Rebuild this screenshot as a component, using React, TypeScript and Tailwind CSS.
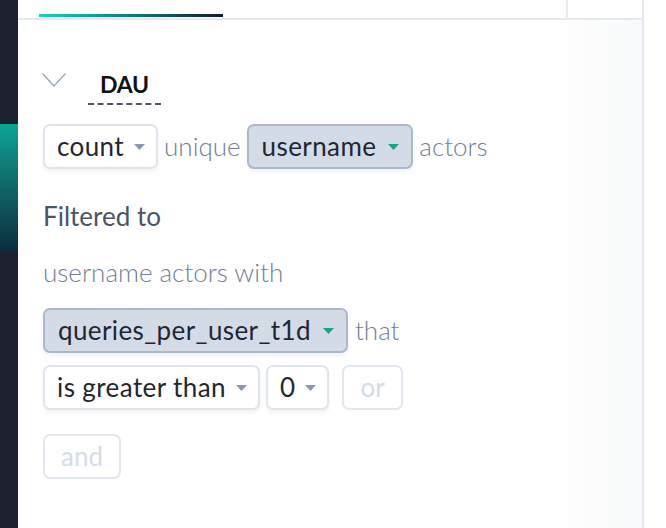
import React from "react";

const Caret = ({ teal = false }: { teal?: boolean }) => (
  <svg width="11" height="6" viewBox="0 0 11 6" className="shrink-0">
    <path d="M0 0 L11 0 L5.5 6 Z" fill={teal ? "#1aa386" : "#8a96ab"} />
  </svg>
);

const Select = ({ label, active = false }: { label: string; active?: boolean }) => (
  <div
    className={
      active
        ? "flex h-[45px] items-center gap-[12px] rounded-[7px] border-2 border-[#a9b8cc] bg-[#d3dce6] pl-[13px] pr-[12px] tracking-[0.4px] text-[#1f2733] shadow-[0_3px_4px_rgba(0,0,0,0.05)]"
        : "flex h-[45px] items-center gap-[10px] rounded-[7px] border-2 border-[#dfe4ed] bg-white pl-[12px] pr-[11px] tracking-[0.4px] text-[#1f2733] shadow-[0_3px_4px_rgba(0,0,0,0.05)]"
    }
  >
    <span>{label}</span>
    <Caret teal={active} />
  </div>
);

const Ghost = ({ label }: { label: string }) => (
  <div className="flex h-[45px] items-center rounded-[7px] border-2 border-[#e2e7ef] bg-white px-[16px] text-[#d5dce6]">
    {label}
  </div>
);

export default function App() {
  return (
    <div
      className="flex h-[528px] w-[666px] overflow-hidden bg-white text-[26px]"
      style={{ fontFamily: "Lato, 'Noto Sans', sans-serif" }}
    >
      {/* left dark sidebar */}
      <div className="relative flex w-[18px] shrink-0 flex-col bg-[#1b222d]">
        <div className="h-[124px] overflow-hidden">
          <span className="relative left-[-10px] top-[70px] block text-[20px] leading-none text-[#9aa4b1]">
            s
          </span>
        </div>
        <div className="h-[128px] bg-gradient-to-b from-[#0ea593] to-[#0a2d3d]" />
      </div>

      {/* main panel */}
      <div className="flex w-[626px] shrink-0 flex-col border-r-2 border-[#e3e7ed] bg-gradient-to-r from-white from-85% to-[#f8f9fa]">
        {/* tab bar */}
        <div className="flex h-[20px] shrink-0 border-b-2 border-[#e6e9ee] bg-white">
          <div className="flex w-[548px] items-end pl-[21px]">
            <div className="mb-px h-[3px] w-[184px] bg-gradient-to-r from-[#14d6bc] via-[#0a7f7c] to-[#0b1c2c]" />
          </div>
          <div className="w-[2px] bg-[#e6e9ee]" />
        </div>

        <div className="flex flex-col pl-[25px]">
          {/* title */}
          <div className="mt-[52px] flex items-start">
            <svg width="24" height="14" viewBox="0 0 24 14" className="ml-[-1px] mt-[1px]">
              <path d="M0.5 0.5 L12 13 L23.5 0.5" fill="none" stroke="#97a3b6" strokeWidth="1.2" />
            </svg>
            <div className="ml-[22px] w-[73px] border-b-2 border-dashed border-[#4b5568] pl-[12px] pb-[7px] text-[23px] font-bold leading-[24px] tracking-[-0.3px] text-[#111111]">
              DAU
            </div>
          </div>

          {/* aggregation row */}
          <div className="mt-[19px] flex items-center gap-[6px]">
            <Select label="count" />
            <span className="font-light text-[#718096]">unique</span>
            <Select label="username" active />
            <span className="font-light text-[#718096]">actors</span>
          </div>

          <div className="mt-[32px] leading-[30px] text-[#4a5568]">Filtered to</div>
          <div className="mt-[26px] font-light leading-[30px] text-[#718096]">username actors with</div>

          <div className="mt-[21px] flex items-center gap-[7px]">
            <Select label="queries_per_user_t1d" active />
            <span className="font-light text-[#718096]">that</span>
          </div>

          <div className="mt-[12px] flex items-center">
            <Select label="is greater than" />
            <div className="ml-[6px]">
              <Select label="0" />
            </div>
            <div className="ml-[13px]">
              <Ghost label="or" />
            </div>
          </div>

          <div className="mt-[24px] flex">
            <Ghost label="and" />
          </div>
        </div>
      </div>
      <div className="flex-1 bg-white" />
    </div>
  );
}
